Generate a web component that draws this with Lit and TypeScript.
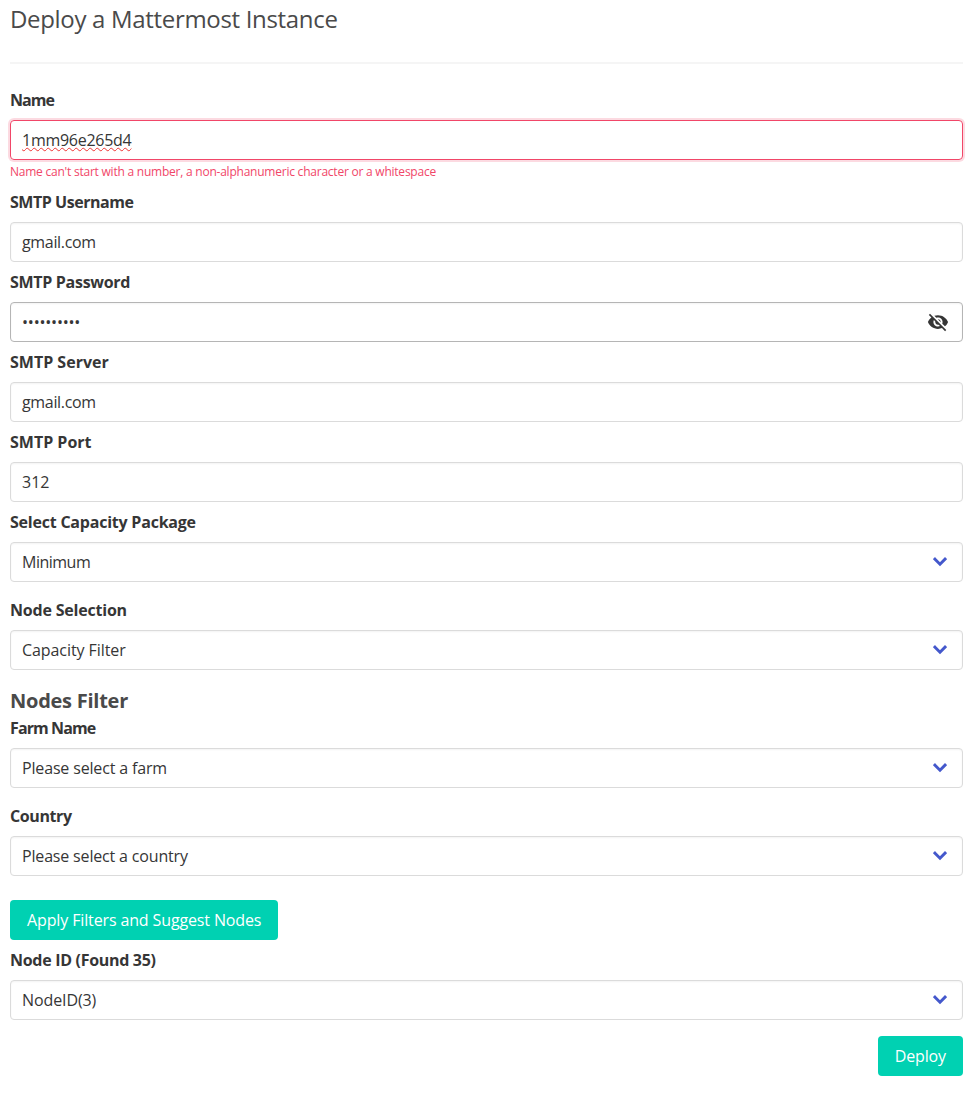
import { LitElement, html, css } from "lit";
import { customElement } from "lit/decorators.js";

const chevron = html`<svg class="chev" width="14" height="10" viewBox="0 0 14 10"><path d="M2 2.2 L7 7.2 L12 2.2" fill="none" stroke="#4458cc" stroke-width="3" stroke-linecap="square" stroke-linejoin="miter"/></svg>`;

const eye = html`<svg class="eye" width="22" height="22" viewBox="0 0 24 24"><path fill="#363636" d="M12 7c2.76 0 5 2.24 5 5 0 .65-.13 1.26-.36 1.83l2.92 2.92c1.51-1.26 2.7-2.89 3.43-4.75-1.73-4.39-6-7.5-11-7.5-1.4 0-2.74.25-3.98.7l2.16 2.16C10.74 7.13 11.35 7 12 7zM2 4.27l2.28 2.28.46.46C3.08 8.3 1.78 10.02 1 12c1.73 4.39 6 7.5 11 7.5 1.55 0 3.03-.3 4.38-.84l.42.42L19.73 22 21 20.73 3.27 3 2 4.27zM7.53 9.8l1.55 1.55c-.05.21-.08.43-.08.65 0 1.66 1.34 3 3 3 .22 0 .44-.03.65-.08l1.55 1.55c-.67.33-1.41.53-2.2.53-2.76 0-5-2.24-5-5 0-.79.2-1.53.53-2.2zm4.31-.78l3.15 3.15.02-.16c0-1.66-1.34-3-3-3l-.17.01z"/></svg>`;

type Txt = [string, number];

@customElement("app-root")
export class AppRoot extends LitElement {
  static styles = css`
    :host { display: block; font-family: "Open Sans", "Noto Sans", sans-serif; color: #363636; background: #fff; min-height: 1093px; }
    .page { padding: 0 11px 0 10px; display: flex; flex-direction: column; }
    h1 { margin: 0; font-size: 24px; font-weight: 400; color: #4a4a4a; line-height: 38px; letter-spacing: -.32px; }
    hr { border: 0; height: 2px; background: #f5f5f5; margin: 24px 0 26px; width: 100%; }
    .field { display: flex; flex-direction: column; margin-bottom: 10px; }
    .sel { margin-bottom: 18px; }
    label { display: block; font-size: 16px; font-weight: 700; height: 20px; line-height: 20px; color: #363636; margin-bottom: 10px; }
    .box { height: 40px; box-sizing: border-box; border: 1px solid #dbdbdb; border-radius: 4px; display: flex; align-items: center; padding: 0 11px; font-size: 16px; justify-content: space-between; box-shadow: inset 0 1px 2px rgba(10,10,10,.05); }
    .err { border-color: #f14668; box-shadow: 0 0 0 2px rgba(241,70,104,.2); }
    .focus { border-color: #b5b5b5; }
    .squig { text-decoration: underline wavy #e33; text-decoration-thickness: 1px; }
    .help { font-size: 12px; color: #f14668; line-height: 18px; margin: 3px 0 1px; letter-spacing: -.23px; }
    h2 { margin: 0 0 4px; font-size: 20px; font-weight: 700; color: #4a4a4a; line-height: 26px; letter-spacing: -.25px; }
    .btn { background: #00d1b2; color: #fff; border: 0; border-radius: 4px; height: 40px; font: inherit; font-size: 16px; padding: 0 17px; display: inline-flex; align-items: center; letter-spacing: -.13px; }
    .row { margin: 6px 0 10px; }
    .end { display: flex; justify-content: flex-end; margin-top: -2px; }
    .chev { margin-right: 4px; }
    .eye { margin-right: 2px; }
  `;
  t([s, ls]: Txt) {
    return html`<span style="letter-spacing:${ls}px">${s}</span>`;
  }
  lab([s, ls]: Txt) {
    return html`<label style="letter-spacing:${ls}px">${s}</label>`;
  }
  field(l: Txt, v: Txt) {
    return html`<div class="field">${this.lab(l)}<div class="box">${this.t(v)}</div></div>`;
  }
  sel(l: Txt, v: Txt) {
    return html`<div class="field sel">${this.lab(l)}<div class="box">${this.t(v)}${chevron}</div></div>`;
  }
  render() {
    return html`<div class="page">
      <h1>Deploy a Mattermost Instance</h1>
      <hr />
      <div class="field">${this.lab(["Name", -1])}<div class="box err"><span class="squig" style="letter-spacing:-.27px">1mm96e265d4</span></div><div class="help">Name can't start with a number, a non-alphanumeric character or a whitespace</div></div>
      ${this.field(["SMTP Username", -0.46], ["gmail.com", -0.33])}
      <div class="field">${this.lab(["SMTP Password", -0.3])}<div class="box focus">${this.t(["••••••••••", -0.2])}${eye}</div></div>
      ${this.field(["SMTP Server", 0], ["gmail.com", -0.33])}
      ${this.field(["SMTP Port", 0], ["312", 0])}
      ${this.sel(["Select Capacity Package", -0.22], ["Minimum", -0.5])}
      ${this.sel(["Node Selection", -0.2], ["Capacity Filter", -0.07])}
      <h2>Nodes Filter</h2>
      ${this.sel(["Farm Name", -0.9], ["Please select a farm", -0.16])}
      ${this.sel(["Country", -0.4], ["Please select a country", -0.17])}
      <div class="row"><button class="btn">Apply Filters and Suggest Nodes</button></div>
      ${this.sel(["Node ID (Found 35)", -0.3], ["NodeID(3)", -0.1])}
      <div class="end"><button class="btn">Deploy</button></div>
    </div>`;
  }
}
